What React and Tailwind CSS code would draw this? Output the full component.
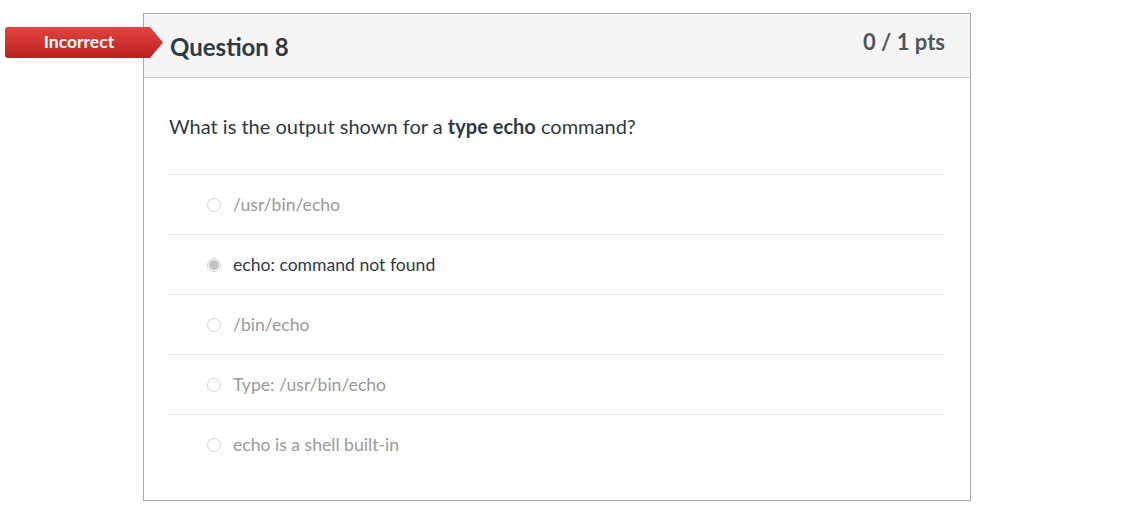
import React from 'react'

const answers = [
  { text: '/usr/bin/echo', selected: false },
  { text: 'echo: command not found', selected: true },
  { text: '/bin/echo', selected: false },
  { text: 'Type: /usr/bin/echo', selected: false },
  { text: 'echo is a shell built-in', selected: false },
]

const Radio = ({ checked }) => (
  <span className="flex items-center justify-center w-[14px] h-[14px] rounded-full border border-[#d4d4d4] bg-white shrink-0">
    {checked && <span className="w-[10px] h-[10px] rounded-full bg-[#c4c4c4]" />}
  </span>
)

export default function App() {
  return (
    <div className="min-h-[508px] bg-white font-['Lato','Noto_Sans',sans-serif] text-[#2d3b45]">
      <div className="relative pt-[13px] pl-[143px]">
        {/* badge */}
        <div className="absolute left-[5px] top-[27px] w-[158px] h-[31px] rounded-l-[3px] bg-gradient-to-b from-[#e5433f] to-[#b7211f] [clip-path:polygon(0_0,145px_0,158px_50%,145px_100%,0_100%)] z-10">
          <div className="w-[148px] h-full flex items-center justify-center text-white font-bold text-[17.5px] pb-[1px]">
            Incorrect
          </div>
        </div>

        <div className="w-[828px] h-[488px] border border-[#aaaaaa] flex flex-col">
          <header className="h-[64px] bg-[#f5f5f5] border-b border-[#c7cdd1] flex justify-between pl-[26px] pr-[25px]">
            <h2 className="mt-[18px] text-[24px] leading-[30px] font-bold text-[#2d3b45]">Question 8</h2>
            <div className="mt-[14px] text-[22px] leading-[28px] font-bold text-[#51565a]">0 / 1 pts</div>
          </header>

          <div className="px-[25px] pt-[33px]">
            <p className="text-[20px] leading-[30px]">
              What is the output shown for a <strong className="font-bold">type echo</strong> command?
            </p>
            <ul className="mt-[33px]">
              {answers.map((a) => (
                <li key={a.text} className="h-[60px] border-t border-[#e6e6e6] flex items-center pl-[38px] pt-[1px] gap-[12px]">
                  <Radio checked={a.selected} />
                  <span className={`pt-[1px] text-[17.6px] ${a.selected ? 'text-[#2d3b45]' : 'text-[#9a9a9a]'}`}>{a.text}</span>
                </li>
              ))}
            </ul>
          </div>
        </div>
      </div>
    </div>
  )
}
